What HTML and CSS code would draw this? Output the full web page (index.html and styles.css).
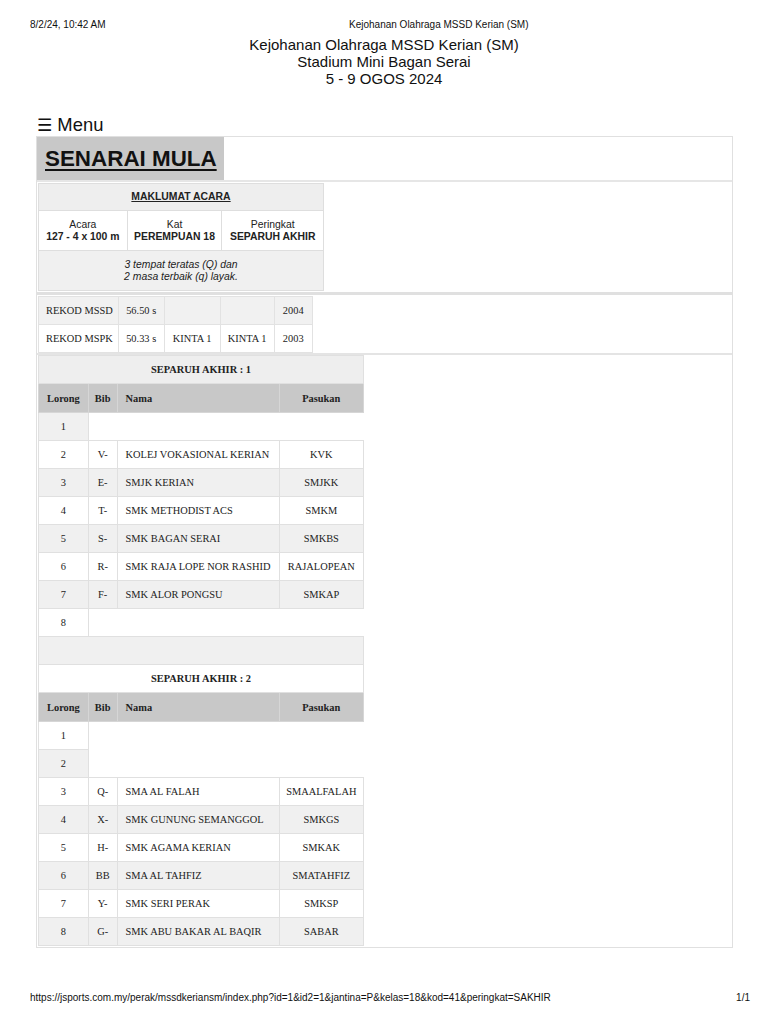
FILE: index.html
```html
<!DOCTYPE html>
<html lang="ms">
<head>
<meta charset="utf-8">
<title>Kejohanan Olahraga MSSD Kerian (SM)</title>
<link rel="stylesheet" href="styles.css">
</head>
<body>
<div class="sheet">
  <header class="print-head">
    <span class="print-date">8/2/24, 10:42 AM</span>
    <span class="print-title">Kejohanan Olahraga MSSD Kerian (SM)</span>
  </header>

  <main class="content">
    <div class="site-title">Kejohanan Olahraga MSSD Kerian (SM)<br>Stadium Mini Bagan Serai<br>5 - 9 OGOS 2024</div>
    <div class="menu"><span class="menu-icon">☰</span> Menu</div>

    <div class="panel">
      <section class="panel-row row-title">
        <h1 class="page-title">SENARAI MULA</h1>
      </section>

      <section class="panel-row row-info">
        <table class="info">
          <tr class="info-head"><td colspan="3"><u>MAKLUMAT ACARA</u></td></tr>
          <tr class="info-main">
            <td class="c1">Acara<br><b>127 - 4 x 100 m</b></td>
            <td class="c2">Kat<br><b>PEREMPUAN 18</b></td>
            <td class="c3">Peringkat<br><b>SEPARUH AKHIR</b></td>
          </tr>
          <tr class="info-note"><td colspan="3"><i>3 tempat teratas (Q) dan<br>2 masa terbaik (q) layak.</i></td></tr>
        </table>
      </section>

      <section class="panel-row row-rekod">
        <table class="rekod">
          <tr class="shade">
            <td class="r1">REKOD MSSD</td>
            <td class="r2">56.50 s</td>
            <td class="r3"></td>
            <td class="r4"></td>
            <td class="r5">2004</td>
          </tr>
          <tr>
            <td class="r1">REKOD MSPK</td>
            <td class="r2">50.33 s</td>
            <td class="r3">KINTA 1</td>
            <td class="r4">KINTA 1</td>
            <td class="r5">2003</td>
          </tr>
        </table>
      </section>

      <section class="panel-row row-list">
        <table class="startlist">
          <tr class="heat shade"><td colspan="4">SEPARUH AKHIR : 1</td></tr>
          <tr class="cols"><th class="lane">Lorong</th><th class="bib">Bib</th><th class="nama">Nama</th><th class="pasukan">Pasukan</th></tr>
          <tr class="shade"><td class="lane">1</td></tr>
          <tr><td class="lane">2</td><td class="bib">V-</td><td class="nama">KOLEJ VOKASIONAL KERIAN</td><td class="pasukan">KVK</td></tr>
          <tr class="shade"><td class="lane">3</td><td class="bib">E-</td><td class="nama">SMJK KERIAN</td><td class="pasukan">SMJKK</td></tr>
          <tr><td class="lane">4</td><td class="bib">T-</td><td class="nama">SMK METHODIST ACS</td><td class="pasukan">SMKM</td></tr>
          <tr class="shade"><td class="lane">5</td><td class="bib">S-</td><td class="nama">SMK BAGAN SERAI</td><td class="pasukan">SMKBS</td></tr>
          <tr><td class="lane">6</td><td class="bib">R-</td><td class="nama">SMK RAJA LOPE NOR RASHID</td><td class="pasukan">RAJALOPEAN</td></tr>
          <tr class="shade"><td class="lane">7</td><td class="bib">F-</td><td class="nama">SMK ALOR PONGSU</td><td class="pasukan">SMKAP</td></tr>
          <tr><td class="lane">8</td></tr>
          <tr class="shade spacer"><td colspan="4"></td></tr>
          <tr class="heat"><td colspan="4">SEPARUH AKHIR : 2</td></tr>
          <tr class="cols"><th class="lane">Lorong</th><th class="bib">Bib</th><th class="nama">Nama</th><th class="pasukan">Pasukan</th></tr>
          <tr><td class="lane">1</td></tr>
          <tr class="shade"><td class="lane">2</td></tr>
          <tr><td class="lane">3</td><td class="bib">Q-</td><td class="nama">SMA AL FALAH</td><td class="pasukan">SMAALFALAH</td></tr>
          <tr class="shade"><td class="lane">4</td><td class="bib">X-</td><td class="nama">SMK GUNUNG SEMANGGOL</td><td class="pasukan">SMKGS</td></tr>
          <tr><td class="lane">5</td><td class="bib">H-</td><td class="nama">SMK AGAMA KERIAN</td><td class="pasukan">SMKAK</td></tr>
          <tr class="shade"><td class="lane">6</td><td class="bib">BB</td><td class="nama">SMA AL TAHFIZ</td><td class="pasukan">SMATAHFIZ</td></tr>
          <tr><td class="lane">7</td><td class="bib">Y-</td><td class="nama">SMK SERI PERAK</td><td class="pasukan">SMKSP</td></tr>
          <tr class="shade"><td class="lane">8</td><td class="bib">G-</td><td class="nama">SMK ABU BAKAR AL BAQIR</td><td class="pasukan">SABAR</td></tr>
        </table>
      </section>
    </div>
  </main>

  <footer class="print-foot">
    <span class="print-url">https://jsports.com.my/perak/mssdkeriansm/index.php?id=1&amp;id2=1&amp;jantina=P&amp;kelas=18&amp;kod=41&amp;peringkat=SAKHIR</span>
    <span class="print-page">1/1</span>
  </footer>
</div>
</body>
</html>
```

FILE: styles.css
```css
html, body {
  margin: 0;
  padding: 0;
  background: #fff;
}

body {
  font-family: "Liberation Sans", Arial, sans-serif;
  color: #222;
}

.sheet {
  min-height: 1024px;
  display: flex;
  flex-direction: column;
}

/* print header / footer */
.print-head {
  display: grid;
  grid-template-columns: 319px auto;
  padding: 19px 30px 0;
  font-size: 10px;
  line-height: 12px;
  color: #111;
}

.print-foot {
  margin-top: auto;
  display: flex;
  justify-content: space-between;
  padding: 0 18px 20px 30px;
  font-size: 10px;
  line-height: 12px;
  color: #111;
}

/* site heading */
.site-title {
  margin-top: 5px;
  text-align: center;
  font-size: 15px;
  line-height: 17px;
  color: #111;
}

.menu {
  margin: 27px 0 0 37px;
  font-size: 18.4px;
  line-height: 22px;
  color: #111;
}

.menu-icon {
  font-family: "DejaVu Sans", sans-serif;
  font-size: 17px;
}

/* panel */
.panel {
  margin-left: 36px;
  width: 695px;
  border: 1px solid #e0e0e0;
}

.panel-row {
  padding: 1px;
}

.row-title {
  padding: 0;
  border-bottom: 2px solid #e6e6e6;
}

.page-title {
  display: inline-block;
  margin: 0;
  padding: 0 7px 0 8px;
  height: 43px;
  line-height: 43px;
  background: #c8c8c8;
  font-size: 22.4px;
  font-weight: bold;
  text-decoration: underline;
  text-decoration-thickness: 2px;
  text-underline-offset: 3px;
  color: #111;
}

.row-info {
  border-bottom: 3px solid #e0e0e0;
}

.row-rekod {
  padding-bottom: 0;
  border-bottom: 2px solid #e4e4e4;
}

.row-list {
  padding-top: 0;
}

table {
  border-collapse: collapse;
}

td, th {
  padding: 0 8px;
  box-sizing: border-box;
}

/* maklumat acara */
.info {
  width: 286px;
  font-size: 10.4px;
  line-height: 12px;
  text-align: center;
  color: #222;
}

.info td {
  border: 1px solid #dedede;
  padding: 0 2px;
  white-space: nowrap;
}

.info-head td {
  height: 27px;
  background: #eeeeee;
  font-weight: bold;
}

.info-main td {
  height: 40px;
  background: #fff;
}

.info-main .c1 { width: 89px; }
.info-main .c2 { width: 95px; }
.info-main .c3 { width: 102px; }

.info-note td {
  height: 40px;
  background: #f0f0f0;
}

/* rekod */
.rekod {
  font-family: "Liberation Serif", "Times New Roman", serif;
  font-size: 10.4px;
  color: #222;
}

.rekod td {
  height: 28px;
  border: 1px solid #e2e2e2;
  white-space: nowrap;
  padding: 0 5px;
}

.rekod .shade td {
  background: #f1f1f1;
}

.rekod .r1 { width: 79px; padding-left: 7px; }
.rekod .r2 { width: 46px; text-align: center; }
.rekod .r3 { width: 56px; text-align: center; }
.rekod .r4 { width: 54px; text-align: center; }
.rekod .r5 { width: 38px; text-align: center; }

/* start list */
.startlist {
  width: 326px;
  font-family: "Liberation Serif", "Times New Roman", serif;
  font-size: 10.4px;
  color: #222;
}

.startlist td,
.startlist th {
  height: 28px;
  border: 1px solid #e0e0e0;
  white-space: nowrap;
}

.startlist .shade td {
  background: #f0f0f0;
}

.startlist .heat td {
  text-align: center;
  font-weight: bold;
  height: 28px;
}

.startlist .heat.shade td {
  background: #eeeeee;
}

.startlist .cols th {
  height: 29px;
  background: #c8c8c8;
  font-weight: bold;
  border-color: #d6d6d6;
}

.startlist .lane { width: 48px; text-align: center; }
.startlist .bib { width: 31px; text-align: center; padding: 0 4px; }
.startlist .nama { width: 162px; text-align: left; }
.startlist .pasukan { width: 85px; text-align: center; padding: 0 6px; }
```
